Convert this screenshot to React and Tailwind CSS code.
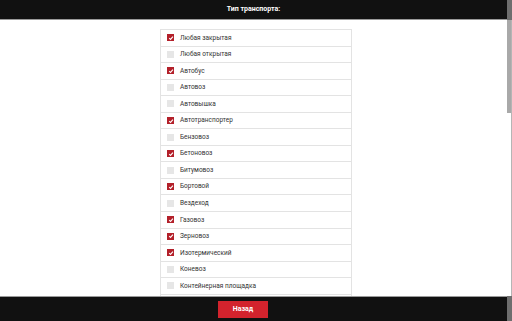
const items = [
  ["Любая закрытая", true],
  ["Любая открытая", false],
  ["Автобус", true],
  ["Автовоз", false],
  ["Автовышка", false],
  ["Автотранспортер", true],
  ["Бензовоз", false],
  ["Бетоновоз", true],
  ["Битумовоз", false],
  ["Бортовой", true],
  ["Вездеход", false],
  ["Газовоз", true],
  ["Зерновоз", true],
  ["Изотермический", true],
  ["Коневоз", false],
  ["Контейнерная площадка", false],
];

const Check = ({ on }) =>
  on ? (
    <span className="w-[7px] h-[7px] bg-[#b3202a] flex items-center justify-center shrink-0">
      <svg width="6" height="6" viewBox="0 0 10 10">
        <path d="M2 5.2 L4.2 7.4 L8.2 2.6" fill="none" stroke="#fff" strokeWidth="1.8" />
      </svg>
    </span>
  ) : (
    <span className="w-[7px] h-[7px] bg-[#e6e6e6] shrink-0" />
  );

const App = () => {
  return (
    <div
      className="w-[512px] h-[321px] flex bg-white overflow-hidden"
      style={{ fontFamily: "Roboto, 'Liberation Sans', Arial, sans-serif" }}
    >
      <div className="flex-1 flex flex-col">
        <div className="h-[20px] bg-[#111] border-b border-[#9a9a9a] flex items-center justify-center">
          <span className="text-white text-[7px] font-bold">Тип транспорта:</span>
        </div>
        <div className="flex-1 overflow-hidden pt-[9px]">
          <div className="w-[192px] ml-[160px] border border-[#e3e3e3] border-b-0">
            {items.map(([label, on]) => (
              <div
                key={label}
                className="h-[16.55px] flex items-center gap-[6px] pl-[6px] border-b border-[#e3e3e3]"
              >
                <Check on={on} />
                <span className="text-[6.5px] text-[#333] leading-none">{label}</span>
              </div>
            ))}
            <div className="h-[16.55px] border-b border-[#e3e3e3]" />
          </div>
        </div>
        <div className="h-[25px] bg-[#111] border-t border-[#9a9a9a] flex items-center pl-[218px]">
          <button className="w-[50px] h-[17px] bg-[#d3232d] text-white text-[7px] font-bold">
            Назад
          </button>
        </div>
      </div>
      <div className="w-[5px] flex flex-col">
        <div className="h-[20px] bg-[#6e6e6e]" />
        <div className="flex-1 flex bg-white">
          <div className="flex-1 flex flex-col">
            <div className="h-[93px] bg-[#a9a9a9]" />
          </div>
          <div className="w-[1px] bg-[#b5b5b5]" />
        </div>
        <div className="h-[25px] bg-[#6e6e6e]" />
      </div>
    </div>
  );
};

export default App;
